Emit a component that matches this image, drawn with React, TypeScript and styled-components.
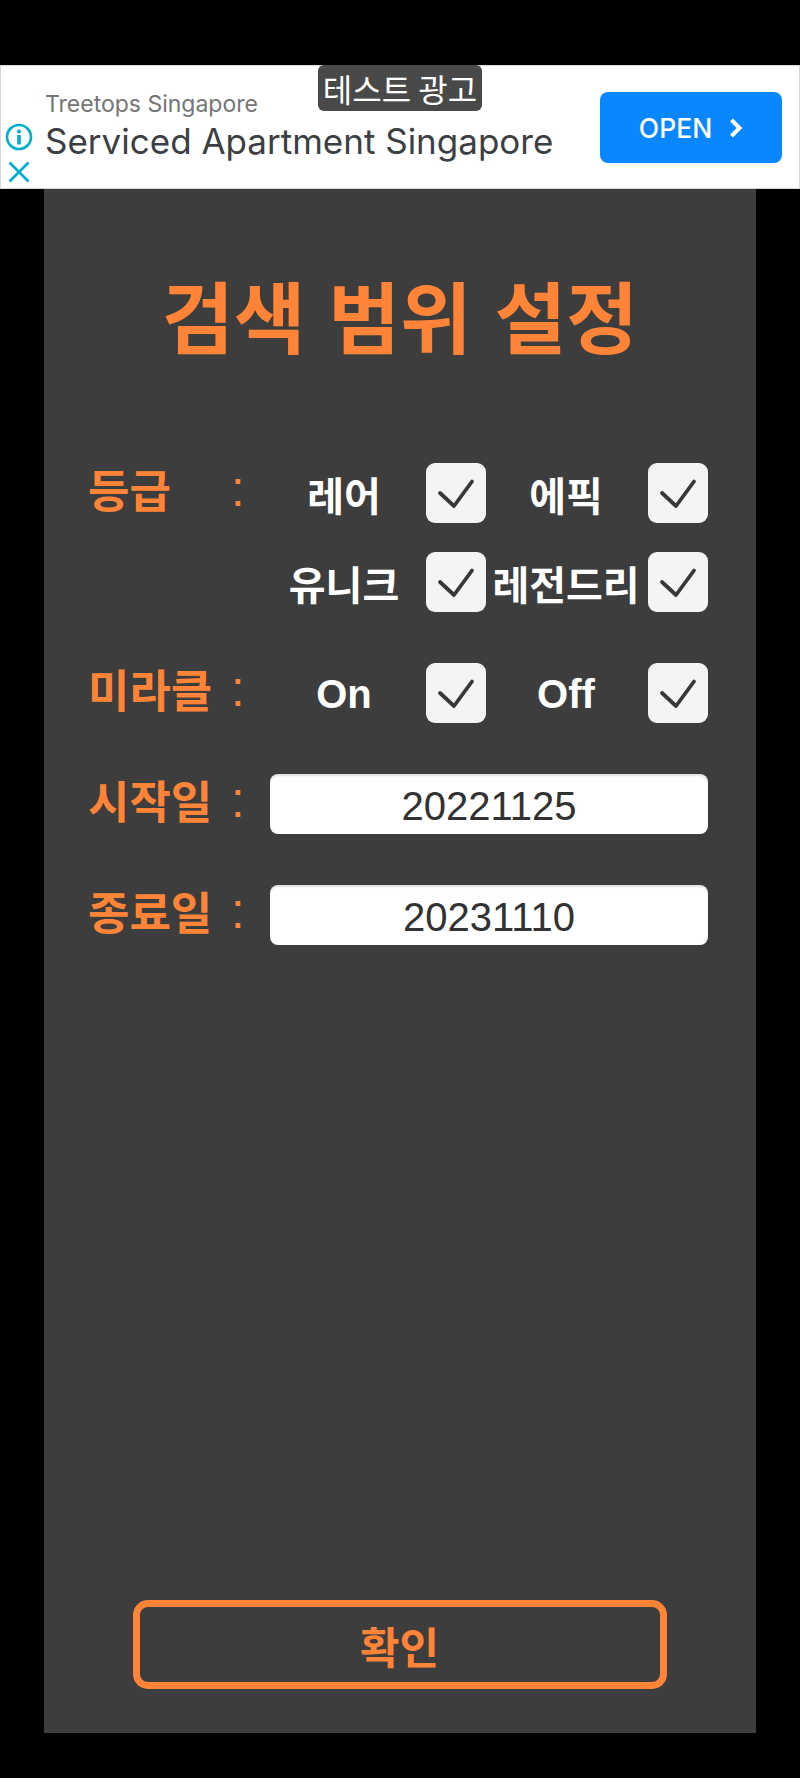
import styled, { createGlobalStyle } from 'styled-components';

const GlobalStyle = createGlobalStyle`
  html, body {
    margin: 0;
    padding: 0;
    background: #000;
  }
  * {
    box-sizing: border-box;
  }
`;

const ORANGE = '#ff8438';
const KR_STACK = '"Liberation Sans", "Noto Sans CJK KR", sans-serif';

const Page = styled.div`
  display: flex;
  flex-direction: column;
  align-items: center;
  width: 800px;
  height: 1778px;
  padding: 65px 0 45px;
  background: #000;
  font-family: ${KR_STACK};
`;

const AdBanner = styled.div`
  position: relative;
  display: flex;
  flex-shrink: 0;
  align-items: stretch;
  width: 100%;
  height: 124px;
  padding-right: 17px;
  background: #fff;
  border: 1px solid #d8d8d8;
`;

const AdBadge = styled.div`
  position: absolute;
  top: -1px;
  left: 317px;
  display: flex;
  align-items: center;
  justify-content: center;
  width: 164px;
  height: 46px;
  border-radius: 6px;
  background: #494949;
  color: #fff;
  font-family: "Noto Sans CJK KR", sans-serif;
  font-size: 32px;
  line-height: 46px;
  white-space: nowrap;
`;

const AdIcons = styled.div`
  display: flex;
  flex-direction: column;
  align-items: center;
  flex-shrink: 0;
  gap: 10px;
  width: 44px;
  padding: 57px 8px 0 0;
`;

const AdCopy = styled.div`
  display: flex;
  flex: 1;
  flex-direction: column;
  padding-top: 23px;
  font-family: Inter, sans-serif;
`;

const Advertiser = styled.div`
  color: #757575;
  font-size: 23px;
  line-height: 30px;
`;

const AdHeadline = styled.div`
  color: #3c4043;
  font-size: 35px;
  line-height: 44px;
  white-space: nowrap;
`;

const OpenButton = styled.div`
  display: flex;
  flex-shrink: 0;
  align-items: center;
  justify-content: center;
  gap: 17px;
  align-self: flex-start;
  width: 182px;
  height: 71px;
  margin-top: 26px;
  border-radius: 8px;
  background: #0a86ff;
  color: #fff;
  font-family: Inter, sans-serif;
  font-size: 26.5px;
  font-weight: 500;
`;

const Panel = styled.main`
  display: flex;
  flex: 1;
  flex-direction: column;
  width: 712px;
  padding: 0 48px 44px 46px;
  background: #3d3d3d;
`;

const Title = styled.h1`
  height: 100px;
  margin: 75px 0 99px;
  padding-left: 2px;
  color: ${ORANGE};
  font-family: "Noto Sans CJK KR", sans-serif;
  font-size: 78px;
  font-weight: 700;
  line-height: 100px;
  text-align: center;
  word-spacing: 5px;
`;

const Row = styled.div<{ $gapAfter: number }>`
  display: flex;
  align-items: center;
  height: 60px;
  margin-bottom: ${({ $gapAfter }) => $gapAfter}px;
`;

const FieldLabel = styled.div`
  flex-shrink: 0;
  width: 130px;
  margin: 0 0 8px -2px;
  color: ${ORANGE};
  font-family: "Noto Sans CJK KR", sans-serif;
  font-size: 45px;
  font-weight: 700;
  line-height: 52px;
  white-space: nowrap;
`;

const Colon = styled.div`
  flex-shrink: 0;
  width: 52px;
  margin-bottom: 8px;
  padding-right: 12px;
  color: ${ORANGE};
  font-size: 50px;
  line-height: 52px;
  text-align: center;
`;

const LabelSpacer = styled.div`
  flex-shrink: 0;
  width: 180px;
`;

const Option = styled.div`
  display: flex;
  flex-shrink: 0;
  align-items: center;
  width: 216px;

  & + & {
    margin-left: 6px;
  }
`;

const OptionLabel = styled.div`
  width: 148px;
  margin-right: 8px;
  padding-top: 2px;
  color: #fff;
  font-size: 40px;
  font-weight: 700;
  text-align: center;
  white-space: nowrap;
`;

const CheckBox = styled.div`
  display: flex;
  flex-shrink: 0;
  width: 60px;
  height: 60px;
  border-radius: 9px;
  background: #f4f4f4;
`;

const DateField = styled.div`
  display: flex;
  flex: 1;
  align-items: center;
  justify-content: center;
  height: 60px;
  padding-top: 5px;
  border-radius: 8px;
  background: #fff;
  box-shadow: inset 0 2px 2px rgba(0, 0, 0, 0.12);
  color: #323232;
  font-size: 40px;
`;

const ConfirmButton = styled.button`
  align-self: center;
  width: 534px;
  height: 89px;
  margin: auto 0 0 1px;
  border: 7px solid ${ORANGE};
  border-radius: 15px;
  background: transparent;
  color: ${ORANGE};
  font-family: "Noto Sans CJK KR", sans-serif;
  font-size: 43px;
  font-weight: 700;
`;

const InfoIcon = () => (
  <svg width="28" height="28" viewBox="0 0 28 28" fill="none">
    <circle cx="14" cy="14" r="12" stroke="#00aecd" strokeWidth="2.6" />
    <circle cx="14" cy="8.5" r="2" fill="#00aecd" />
    <rect x="12.2" y="12" width="3.6" height="9.5" fill="#00aecd" />
  </svg>
);

const CloseIcon = () => (
  <svg width="22" height="22" viewBox="0 0 22 22" fill="none">
    <path d="M1.5 1.5 20.5 20.5M20.5 1.5 1.5 20.5" stroke="#00aecd" strokeWidth="2.6" />
  </svg>
);

const Chevron = () => (
  <svg width="14" height="20" viewBox="0 0 14 20" fill="none">
    <path d="M2.5 2 10.5 10 2.5 18" stroke="#fff" strokeWidth="4" />
  </svg>
);

const CheckMark = () => (
  <svg width="60" height="60" viewBox="0 0 60 60" fill="none">
    <path
      d="M14 30 28 43 46 18.5"
      stroke="#383838"
      strokeWidth="3.8"
      strokeLinecap="round"
      strokeLinejoin="round"
    />
  </svg>
);

const CheckOption = ({ label }: { label: string }) => (
  <Option>
    <OptionLabel>{label}</OptionLabel>
    <CheckBox>
      <CheckMark />
    </CheckBox>
  </Option>
);

export default function App() {
  return (
    <Page>
      <GlobalStyle />
      <AdBanner>
        <AdBadge>테스트 광고</AdBadge>
        <AdIcons>
          <InfoIcon />
          <CloseIcon />
        </AdIcons>
        <AdCopy>
          <Advertiser>Treetops Singapore</Advertiser>
          <AdHeadline>Serviced Apartment Singapore</AdHeadline>
        </AdCopy>
        <OpenButton>
          OPEN
          <Chevron />
        </OpenButton>
      </AdBanner>
      <Panel>
        <Title>검색 범위 설정</Title>
        <Row $gapAfter={29}>
          <FieldLabel>등급</FieldLabel>
          <Colon>:</Colon>
          <CheckOption label="레어" />
          <CheckOption label="에픽" />
        </Row>
        <Row $gapAfter={51}>
          <LabelSpacer />
          <CheckOption label="유니크" />
          <CheckOption label="레전드리" />
        </Row>
        <Row $gapAfter={51}>
          <FieldLabel>미라클</FieldLabel>
          <Colon>:</Colon>
          <CheckOption label="On" />
          <CheckOption label="Off" />
        </Row>
        <Row $gapAfter={51}>
          <FieldLabel>시작일</FieldLabel>
          <Colon>:</Colon>
          <DateField>20221125</DateField>
        </Row>
        <Row $gapAfter={0}>
          <FieldLabel>종료일</FieldLabel>
          <Colon>:</Colon>
          <DateField>20231110</DateField>
        </Row>
        <ConfirmButton>확인</ConfirmButton>
      </Panel>
    </Page>
  );
}
